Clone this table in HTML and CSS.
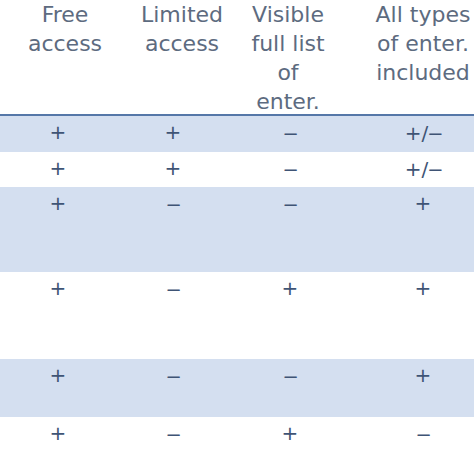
FILE: index.html
```html
<!DOCTYPE html>
<html>
<head>
<meta charset="utf-8">
<link rel="stylesheet" href="styles.css">
</head>
<body>
<div class="table">
  <div class="row head">
    <div class="cell c1">Free<br>access</div>
    <div class="cell c2">Limited<br>access</div>
    <div class="cell c3">Visible<br>full list<br>of<br>enter.</div>
    <div class="cell c4">All types<br>of enter.<br>included</div>
  </div>
  <div class="row band r1">
    <div class="cell">+</div><div class="cell">+</div><div class="cell"><span class="dash">–</span></div><div class="cell">+/<span class="dash">–</span></div>
  </div>
  <div class="row r2">
    <div class="cell">+</div><div class="cell">+</div><div class="cell"><span class="dash">–</span></div><div class="cell">+/<span class="dash">–</span></div>
  </div>
  <div class="row band r3">
    <div class="cell">+</div><div class="cell"><span class="dash">–</span></div><div class="cell"><span class="dash">–</span></div><div class="cell">+</div>
  </div>
  <div class="row r4">
    <div class="cell">+</div><div class="cell"><span class="dash">–</span></div><div class="cell">+</div><div class="cell">+</div>
  </div>
  <div class="row band r5">
    <div class="cell">+</div><div class="cell"><span class="dash">–</span></div><div class="cell"><span class="dash">–</span></div><div class="cell">+</div>
  </div>
  <div class="row r6">
    <div class="cell">+</div><div class="cell"><span class="dash">–</span></div><div class="cell">+</div><div class="cell"><span class="dash">–</span></div>
  </div>
</div>
</body>
</html>
```

FILE: styles.css
```css
html, body {
  margin: 0;
  padding: 0;
  background: #ffffff;
  overflow: hidden;
}
body {
  width: 474px;
  height: 474px;
  font-family: "DejaVu Sans", "Liberation Sans", sans-serif;
}
.table {
  width: 496px;
  display: flex;
  flex-direction: column;
}
.row {
  display: grid;
  grid-template-columns: 116px 114px 120px 146px;
  color: #3f5475;
  font-size: 20px;
  line-height: 29px;
}
.row .cell {
  text-align: center;
  padding-top: 2px;
}
.dash {
  font-family: "Liberation Sans", Arial, sans-serif;
  font-size: 22px;
  padding-left: 1px;
}
.head {
  height: 114px;
  border-bottom: 2px solid #5577a8;
  color: #5d6b80;
  font-size: 22px;
  line-height: 29px;
}
.head .cell {
  padding-top: 0;
}
.head .c1 { padding-left: 14px; }
.head .c2 { padding-left: 18px; }
.head .c3 { padding-right: 4px; }
.band { background: #d4dff0; }
.r1 { height: 36px; }
.r2 { height: 35px; }
.r3 { height: 85px; }
.r4 { height: 87px; }
.r5 { height: 58px; }
.r6 { height: 60px; }
```
